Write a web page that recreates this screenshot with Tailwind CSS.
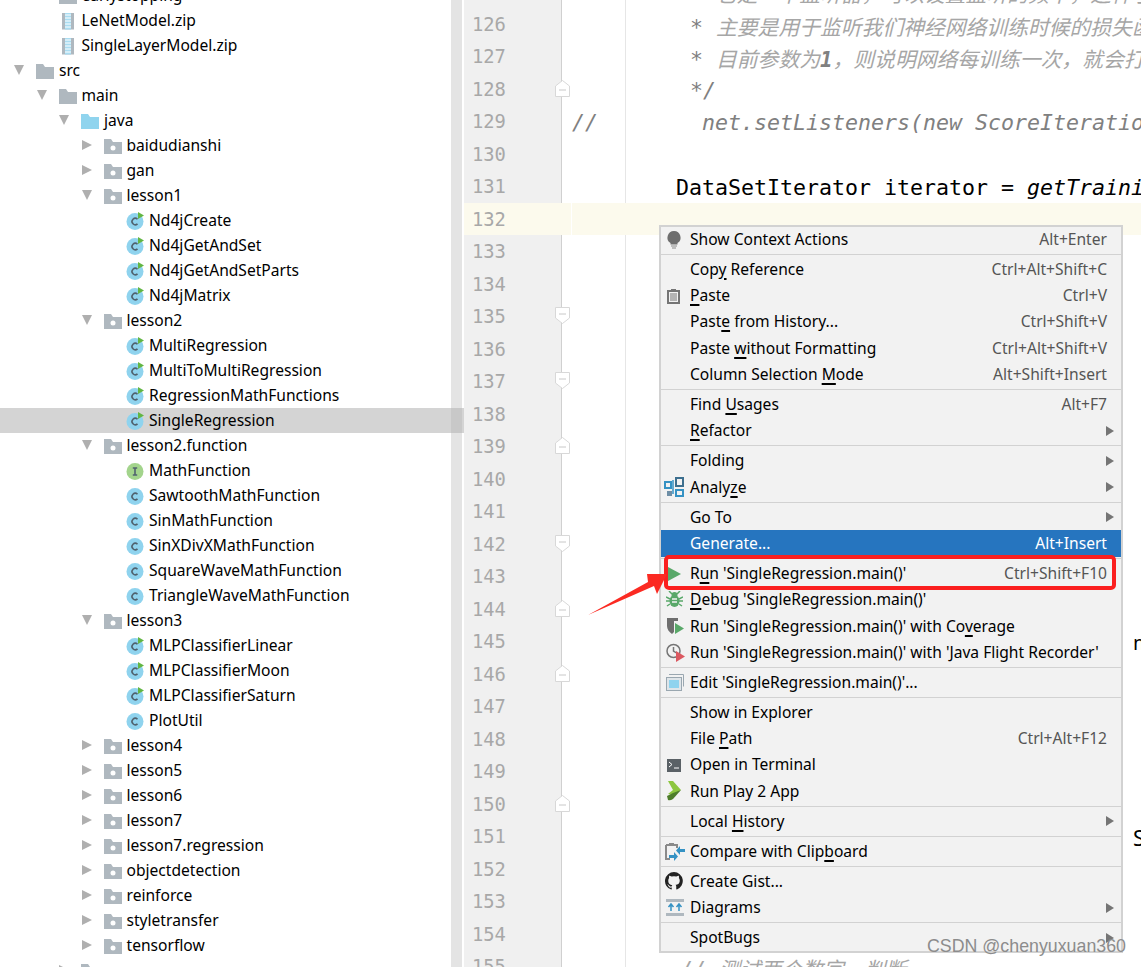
<!DOCTYPE html>
<html lang="en">
<head>
  <meta charset="UTF-8">
  <title>SingleRegression</title>
  <script src="https://cdn.jsdelivr.net/npm/@tailwindcss/browser@4"></script>
</head>
<body class="relative h-[967px] w-[1141px] overflow-hidden bg-white font-['Noto_Sans','Open_Sans',sans-serif] text-[15.6px] text-black">

  <!-- icon set -->
  <svg class="hidden">
    <symbol id="folder" viewBox="0 0 18 16"><path d="M0 1h7l2 3h9v12H0z" fill="#afb8bf"/></symbol>
    <symbol id="source" viewBox="0 0 18 16"><path d="M0 1h7l2 3h9v12H0z" fill="#90d4ee"/></symbol>
    <symbol id="package" viewBox="0 0 18 16"><path d="M0 1h7l2 3h9v12H0z" fill="#afb8bf"/><circle cx="9" cy="10" r="2.500" fill="#fff"/></symbol>
    <symbol id="zip" viewBox="0 0 18 18"><rect x="3" y="1" width="12" height="16.500" fill="#afb8bf"/><rect x="6" y="1" width="6" height="16.500" fill="#a9dcf1"/><path d="M6 3h6M6 6h6M6 9h6M6 12h6M6 15h6" stroke="#fff" stroke-width="1"/></symbol>
    <symbol id="class" viewBox="0 0 18 18"><circle cx="9" cy="9.500" r="8.500" fill="#8fd3ee"/><path d="M11.500 7.200a3.200 3.200 0 1 0 0 4.600" fill="none" stroke="#50626f" stroke-width="1.600"/></symbol>
    <symbol id="runnable" viewBox="0 0 18 18"><circle cx="9" cy="9.500" r="8.500" fill="#8fd3ee"/><path d="M11.500 7.200a3.200 3.200 0 1 0 0 4.600" fill="none" stroke="#50626f" stroke-width="1.600"/><path d="M12 0l6 3.500-6 3.500z" fill="#62b543"/></symbol>
    <symbol id="iface" viewBox="0 0 18 18"><circle cx="9" cy="9.500" r="8.500" fill="#a3d48c"/><path d="M6.800 6h4.400M6.800 13h4.400M9 6v7" fill="none" stroke="#50626f" stroke-width="1.600"/></symbol>
    <symbol id="foldup" viewBox="0 0 15 17"><path d="M.5 16.500V6L7.500.5l7 5.500v10.500z" fill="#fff" stroke="#d8d8d8"/><path d="M4 10h7" stroke="#c8c8c8"/></symbol>
    <symbol id="folddown" viewBox="0 0 15 17"><path d="M.5.5V11l7 5.500 7-5.500V.5z" fill="#fff" stroke="#d8d8d8"/><path d="M4 7h7" stroke="#c8c8c8"/></symbol>
    <symbol id="sub" viewBox="0 0 8 10"><path d="M0 0l8 5-8 5z" fill="#757575"/></symbol>
  </svg>

  <div class="flex h-full">
    <!-- project tree -->
    <div id="tree" class="w-[451px] shrink-0 overflow-hidden"></div>

    <!-- tree scrollbar strip -->
    <div class="w-[13px] shrink-0 border-r-2 border-white bg-[#e4e4e4]"></div>

    <!-- gutter -->
    <div id="gutter" class="w-[98px] shrink-0 border-r border-[#d0d0d0] bg-[#f0f0f0] pl-2 font-['DejaVu_Sans_Mono',monospace] text-[18.8px] text-[#a8a8a8]"></div>

    <!-- code -->
    <div class="relative min-w-0 flex-1 overflow-hidden font-['DejaVu_Sans_Mono',monospace] text-[21.6px] leading-[36px]">
      <div class="absolute top-0 bottom-0 left-[63px] w-px bg-[#e6e6e6]"></div>
      <div class="relative -mt-[24.75px]">
        <div class="h-[32.5px] overflow-hidden pl-[128px] whitespace-pre text-[#808080] italic">* <span class="font-['Noto_Sans_CJK_SC',sans-serif] text-[20.8px] text-[#a6a6a6]">它是一个监听器，可以设置监听的频率，这样子就可以</span></div>
        <div class="h-[32.5px] overflow-hidden pl-[128px] whitespace-pre text-[#808080] italic">* <span class="font-['Noto_Sans_CJK_SC',sans-serif] text-[20.8px] text-[#a6a6a6]">主要是用于监听我们神经网络训练时候的损失函数</span></div>
        <div class="h-[32.5px] overflow-hidden pl-[128px] whitespace-pre text-[#808080] italic">* <span class="font-['Noto_Sans_CJK_SC',sans-serif] text-[20.8px] text-[#a6a6a6]">目前参数为<b class="font-['DejaVu_Sans_Mono',monospace] text-[#808080]">1</b>，则说明网络每训练一次，就会打印一次</span></div>
        <div class="h-[32.5px] pl-[128px] text-[#808080] italic">*/</div>
        <div class="flex h-[32.5px] whitespace-pre text-[#808080] italic"><span class="w-[140px] shrink-0 pl-[10px]">//</span><span>net.setListeners(new ScoreIterationListener(1));</span></div>
        <div class="h-[32.5px]"></div>
        <div class="h-[32.5px] pl-[114px] whitespace-pre">DataSetIterator iterator = <i>getTrainingDataSetIterator();</i></div>
        <div class="relative h-[32.5px] bg-[#fcfaed]"><div class="absolute top-0 bottom-0 left-[9px] w-px bg-white"></div></div>
        <div class="h-[390px]"></div>
        <div class="flex h-[32.5px] justify-end font-['Noto_Sans',sans-serif] text-[20px]"><span class="w-[8px] overflow-hidden">m</span></div>
        <div class="h-[162.5px]"></div>
        <div class="flex h-[32.5px] justify-end font-['Noto_Sans',sans-serif]"><span class="w-[8px] overflow-hidden">S</span></div>
        <div class="h-[97.5px]"></div>
        <div class="h-[32.5px] pl-[118px] whitespace-pre text-[#a6a6a6] italic">// <span class="font-['Noto_Sans_CJK_SC',sans-serif] text-[20.8px]">测试两个数字，判断</span></div>
      </div>
    </div>
  </div>

  <!-- selected row over the scrollbar strip -->
  <div class="absolute top-[408px] left-[451px] h-[25px] w-[13px] border-r-2 border-[#d4d4d4] bg-[#c8c8c8]"></div>

  <!-- context menu -->
  <div class="absolute top-[225px] left-[659px] w-[464px] border-2 border-[#d2d2d2] bg-[#f2f2f2] [&_u]:decoration-[1.5px] [&_u]:underline-offset-[3px]" id="menu">
    <div class="flex h-[25.5px] items-center pr-[14px] pl-[29px]"><svg class="absolute left-[5px] h-[19px] w-[16px]" viewBox="0 0 16 19"><path d="M8 1a6.500 6.500 0 0 0-3.500 12v1.500h7V13A6.500 6.500 0 0 0 8 1z" fill="#6e6e6e"/><path d="M5 16h6M6 18h4" stroke="#8a8a8a"/></svg><span class="flex-1">Show Context Actions</span><span class="text-[#555]">Alt+Enter</span></div>
    <div class="my-[1.33px] h-px bg-[#d2d2d2]"></div>
    <div class="flex h-[26.33px] items-center pr-[14px] pl-[29px]"><span class="flex-1">Cop<u>y</u> Reference</span><span class="text-[#555]">Ctrl+Alt+Shift+C</span></div>
    <div class="flex h-[26.33px] items-center pr-[14px] pl-[29px]"><svg class="absolute left-[6px] h-[16px] w-[13px]" viewBox="0 0 13 16"><path d="M1 3h11v12H1z" fill="none" stroke="#757575" stroke-width="2"/><path d="M4 1h5v3H4z" fill="#757575"/><rect x="3" y="5" width="7" height="8" fill="#b4b4b4"/></svg><span class="flex-1"><u>P</u>aste</span><span class="text-[#555]">Ctrl+V</span></div>
    <div class="flex h-[26.33px] items-center pr-[14px] pl-[29px]"><span class="flex-1">Past<u>e</u> from History...</span><span class="text-[#555]">Ctrl+Shift+V</span></div>
    <div class="flex h-[26.33px] items-center pr-[14px] pl-[29px]"><span class="flex-1">Paste <u>w</u>ithout Formatting</span><span class="text-[#555]">Ctrl+Alt+Shift+V</span></div>
    <div class="flex h-[26.33px] items-center pr-[14px] pl-[29px]"><span class="flex-1">Column Selection <u>M</u>ode</span><span class="text-[#555]">Alt+Shift+Insert</span></div>
    <div class="my-[1.33px] h-px bg-[#d2d2d2]"></div>
    <div class="flex h-[26.33px] items-center pr-[14px] pl-[29px]"><span class="flex-1">Find <u>U</u>sages</span><span class="text-[#555]">Alt+F7</span></div>
    <div class="flex h-[26.33px] items-center pr-[7px] pl-[29px]"><span class="flex-1"><u>R</u>efactor</span><svg class="h-[10px] w-[8px]"><use href="#sub"/></svg></div>
    <div class="my-[1.33px] h-px bg-[#d2d2d2]"></div>
    <div class="flex h-[26.33px] items-center pr-[7px] pl-[29px]"><span class="flex-1">Folding</span><svg class="h-[10px] w-[8px]"><use href="#sub"/></svg></div>
    <div class="flex h-[26.33px] items-center pr-[7px] pl-[29px]"><svg class="absolute left-[3px] h-[20px] w-[20px]" viewBox="0 0 20 20"><rect x="1" y="5" width="6" height="6" fill="none" stroke="#3592c4" stroke-width="2"/><rect x="12" y="1" width="7" height="8" fill="none" stroke="#3d6f8f" stroke-width="2"/><rect x="3" y="14" width="5" height="5" fill="#6e8ea6"/><rect x="12" y="13" width="7" height="6" fill="none" stroke="#3592c4" stroke-width="2"/><path d="M9 3v14" stroke="#3592c4" stroke-width="1.500"/></svg><span class="flex-1">Analy<u>z</u>e</span><svg class="h-[10px] w-[8px]"><use href="#sub"/></svg></div>
    <div class="my-[1.33px] h-px bg-[#d2d2d2]"></div>
    <div class="flex h-[26.33px] items-center pr-[7px] pl-[29px]"><span class="flex-1">Go To</span><svg class="h-[10px] w-[8px]"><use href="#sub"/></svg></div>
    <div class="flex h-[26.33px] items-center bg-[#2675bf] pr-[14px] pl-[29px] text-white"><span class="flex-1">Generate...</span><span>Alt+Insert</span></div>
    <div class="my-[1.33px] h-px bg-[#d2d2d2]"></div>
    <div class="flex h-[26.33px] items-center pr-[14px] pl-[29px]"><svg class="absolute left-[7px] h-[14px] w-[13px]" viewBox="0 0 13 14"><path d="M0 0l13 7-13 7z" fill="#59a869"/></svg><span class="flex-1">R<u>u</u>n 'SingleRegression.main()'</span><span class="text-[#555]">Ctrl+Shift+F10</span></div>
    <div class="flex h-[26.33px] items-center pr-[14px] pl-[29px]"><svg class="absolute left-[5px] h-[17px] w-[17px]" viewBox="0 0 17 17"><ellipse cx="8.500" cy="10" rx="5" ry="6" fill="#59a869"/><circle cx="8.500" cy="4" r="3" fill="#59a869"/><path d="M0 6l4 2M17 6l-4 2M0 10h4M17 10h-4M1 15l3-2M16 15l-3-2M3 0l3 3M14 0l-3 3" stroke="#59a869" stroke-width="1.500"/><path d="M6 8h5M6 11h5" stroke="#f2f2f2" stroke-width="1.500"/></svg><span class="flex-1"><u>D</u>ebug 'SingleRegression.main()'</span></div>
    <div class="flex h-[26.33px] items-center pr-[14px] pl-[29px]"><svg class="absolute left-[5px] h-[18px] w-[19px]" viewBox="0 0 19 18"><path d="M1 1h11v3H8v11l-2 2C3 15 1 12 1 9z" fill="#6e6e6e"/><path d="M9 6l9 5.500L9 17z" fill="#59a869"/></svg><span class="flex-1">Run 'SingleRegression.main()' with Co<u>v</u>erage</span></div>
    <div class="flex h-[26.33px] items-center pr-[14px] pl-[29px]"><svg class="absolute left-[5px] h-[19px] w-[19px]" viewBox="0 0 19 19"><circle cx="7.500" cy="8" r="6.500" fill="none" stroke="#757575" stroke-width="1.500"/><path d="M7.500 4v4l3 2" fill="none" stroke="#757575" stroke-width="1.500"/><path d="M10 8l9 5.500L10 19z" fill="#db5860"/></svg><span class="flex-1">Run 'SingleRegression.main()' with 'Java Flight Recorder'</span></div>
    <div class="my-[1.33px] h-px bg-[#d2d2d2]"></div>
    <div class="flex h-[26.33px] items-center pr-[14px] pl-[29px]"><svg class="absolute left-[5px] h-[17px] w-[18px]" viewBox="0 0 18 17"><path d="M3 .5h14.500v12" fill="none" stroke="#9aa7b0"/><rect x=".5" y="3.500" width="15" height="13" fill="#dfe5e9" stroke="#9aa7b0"/><rect x="3" y="6" width="10" height="8" fill="#8fd3ee"/></svg><span class="flex-1">Edit 'SingleRegression.main()'...</span></div>
    <div class="my-[1.33px] h-px bg-[#d2d2d2]"></div>
    <div class="flex h-[26.33px] items-center pr-[14px] pl-[29px]"><span class="flex-1">Show in Explorer</span></div>
    <div class="flex h-[26.33px] items-center pr-[14px] pl-[29px]"><span class="flex-1">File <u>P</u>ath</span><span class="text-[#555]">Ctrl+Alt+F12</span></div>
    <div class="flex h-[26.33px] items-center pr-[14px] pl-[29px]"><svg class="absolute left-[6px] h-[13px] w-[14px]" viewBox="0 0 14 13"><rect width="14" height="13" fill="#5a6166"/><path d="M2 3l3 2.500L2 8" fill="none" stroke="#fff"/><path d="M7 9h5" stroke="#fff"/></svg><span class="flex-1">Open in Terminal</span></div>
    <div class="flex h-[26.33px] items-center pr-[14px] pl-[29px]"><svg class="absolute left-[6px] h-[20px] w-[14px]" viewBox="0 0 14 20"><path d="M1 0h5l8 9-8 5-5-1 5-4z" fill="#8dc63f"/><path d="M14 9l-8 9q-3 2-5 1l-1-4 6-3z" fill="#4e7d2b"/></svg><span class="flex-1">Run Play 2 App</span></div>
    <div class="my-[1.33px] h-px bg-[#d2d2d2]"></div>
    <div class="flex h-[26.33px] items-center pr-[7px] pl-[29px]"><span class="flex-1">Local <u>H</u>istory</span><svg class="h-[10px] w-[8px]"><use href="#sub"/></svg></div>
    <div class="my-[1.33px] h-px bg-[#d2d2d2]"></div>
    <div class="flex h-[26.33px] items-center pr-[14px] pl-[29px]"><svg class="absolute left-[4px] h-[19px] w-[20px]" viewBox="0 0 20 19"><path d="M1 3h11v3M1 3v14h4" fill="none" stroke="#8a8a8a" stroke-width="2"/><path d="M4 1h5v3H4z" fill="#8a8a8a"/><path d="M4 13h5v-3l4 4.500-4 4.500v-3H4z" fill="#3592c4"/><path d="M20 7h-5V4l-4 4.500 4 4.500v-3h5z" fill="#3592c4"/></svg><span class="flex-1">Compare with Clip<u>b</u>oard</span></div>
    <div class="my-[1.33px] h-px bg-[#d2d2d2]"></div>
    <div class="flex h-[26.33px] items-center pr-[14px] pl-[29px]"><svg class="absolute left-[4px] h-[18px] w-[18px]" viewBox="0 0 16 16"><path fill="#222" d="M8 0a8 8 0 0 0-2.500 15.600c.4.100.5-.2.500-.4v-1.400c-2.200.5-2.700-1-2.700-1-.4-.9-.9-1.200-.9-1.200-.7-.5.100-.5.100-.5.800.100 1.200.8 1.200.8.700 1.200 1.900.9 2.300.7.100-.5.300-.9.500-1.100-1.800-.2-3.600-.9-3.600-4 0-.9.300-1.600.8-2.100-.1-.2-.4-1 .100-2.100 0 0 .7-.2 2.200.8a7.600 7.600 0 0 1 4 0c1.500-1 2.200-.8 2.200-.8.400 1.100.2 1.900.1 2.100.5.600.8 1.300.8 2.100 0 3.100-1.900 3.700-3.700 3.900.3.300.6.800.6 1.500v2.200c0 .2.100.5.600.4A8 8 0 0 0 8 0z"/></svg><span class="flex-1">Create Gist...</span></div>
    <div class="flex h-[26.33px] items-center pr-[7px] pl-[29px]"><svg class="absolute left-[5px] h-[17px] w-[18px]" viewBox="0 0 18 17"><rect width="18" height="3" fill="#afb8bf"/><rect y="14" width="18" height="3" fill="#afb8bf"/><path d="M5 12V6M2.500 8L5 5l2.500 3M13 12V6M10.500 8L13 5l2.500 3" fill="none" stroke="#3592c4" stroke-width="1.500"/></svg><span class="flex-1">Diagrams</span><svg class="h-[10px] w-[8px]"><use href="#sub"/></svg></div>
    <div class="my-[1.33px] h-px bg-[#d2d2d2]"></div>
    <div class="flex h-[26.33px] items-center pr-[7px] pl-[29px]"><span class="flex-1">SpotBugs</span><svg class="h-[10px] w-[8px]"><use href="#sub"/></svg></div>
  </div>

  <!-- annotation: red box and arrow -->
  <div class="absolute top-[555px] left-[664px] h-[35px] w-[452px] rounded-[5px] border-[4px] border-[#fb1f1f]"></div>
  <svg class="absolute top-[565px] left-[585px] h-[55px] w-[85px]" viewBox="0 0 85 55"><path d="M3 50L63 17 62 9 82 9 72 29 69 21z" fill="#fb2a22"/></svg>

  <!-- watermark -->
  <div class="absolute top-[933px] left-[927px] font-['Liberation_Sans',sans-serif] text-[17.8px] text-[#8c8c8c]">CSDN @chenyuxuan360</div>

  <script>
    const rows = [
      [1, 'folder', 'earlystopping', ''],
      [1, 'zip', 'LeNetModel.zip', ''],
      [1, 'zip', 'SingleLayerModel.zip', ''],
      [0, 'folder', 'src', 'open'],
      [1, 'folder', 'main', 'open'],
      [2, 'source', 'java', 'open'],
      [3, 'package', 'baidudianshi', 'closed'],
      [3, 'package', 'gan', 'closed'],
      [3, 'package', 'lesson1', 'open'],
      [4, 'runnable', 'Nd4jCreate', ''],
      [4, 'runnable', 'Nd4jGetAndSet', ''],
      [4, 'runnable', 'Nd4jGetAndSetParts', ''],
      [4, 'runnable', 'Nd4jMatrix', ''],
      [3, 'package', 'lesson2', 'open'],
      [4, 'runnable', 'MultiRegression', ''],
      [4, 'runnable', 'MultiToMultiRegression', ''],
      [4, 'runnable', 'RegressionMathFunctions', ''],
      [4, 'runnable', 'SingleRegression', '', true],
      [3, 'package', 'lesson2.function', 'open'],
      [4, 'iface', 'MathFunction', ''],
      [4, 'class', 'SawtoothMathFunction', ''],
      [4, 'class', 'SinMathFunction', ''],
      [4, 'class', 'SinXDivXMathFunction', ''],
      [4, 'class', 'SquareWaveMathFunction', ''],
      [4, 'class', 'TriangleWaveMathFunction', ''],
      [3, 'package', 'lesson3', 'open'],
      [4, 'runnable', 'MLPClassifierLinear', ''],
      [4, 'runnable', 'MLPClassifierMoon', ''],
      [4, 'runnable', 'MLPClassifierSaturn', ''],
      [4, 'class', 'PlotUtil', ''],
      [3, 'package', 'lesson4', 'closed'],
      [3, 'package', 'lesson5', 'closed'],
      [3, 'package', 'lesson6', 'closed'],
      [3, 'package', 'lesson7', 'closed'],
      [3, 'package', 'lesson7.regression', 'closed'],
      [3, 'package', 'objectdetection', 'closed'],
      [3, 'package', 'reinforce', 'closed'],
      [3, 'package', 'styletransfer', 'closed'],
      [3, 'package', 'tensorflow', 'closed'],
      [2, 'folder', '', 'closed'],
    ];

    // chevrons sit one slot to the left of the icon
    const arrows = {
      open: '<svg class="absolute left-[-22px] top-[7px] h-[10px] w-[10px]" viewBox="0 0 10 10"><path d="M0 0h10L5 10z" fill="#afafaf"/></svg>',
      closed: '<svg class="absolute left-[-22px] top-[7px] h-[10px] w-[10px]" viewBox="0 0 10 10"><path d="M0 0l10 5-10 5z" fill="#afafaf"/></svg>',
      '': '',
    };

    document.getElementById('tree').innerHTML = rows.map(([depth, icon, name, state, selected]) => `
      <div class="flex h-[25px] items-center whitespace-pre ${selected ? 'bg-[#d4d4d4]' : ''} ${name === 'earlystopping' ? '-mt-[17px]' : ''}" style="padding-left:${36 + depth * 22.5}px">
        <span class="relative flex h-[25px] w-[23px] shrink-0 items-center">${arrows[state]}<svg class="h-[18px] w-[18px]"><use href="#${icon}"/></svg></span>
        <span>${name}</span>
      </div>`).join('');

    const folds = { 128: 'foldup', 135: 'folddown', 137: 'folddown', 139: 'foldup', 142: 'folddown', 144: 'foldup', 146: 'foldup', 150: 'foldup' };
    let gutter = '';
    for (let n = 125; n <= 155; n++) {
      gutter += `<div class="relative h-[32.5px] leading-[34px] ${n === 132 ? '-mr-px -ml-2 bg-[#fcfaed] pl-2' : ''}">${n}${folds[n] ? `<svg class="absolute right-[-9px] top-[7px] h-[17px] w-[15px]"><use href="#${folds[n]}"/></svg>` : ''}</div>`;
    }
    document.getElementById('gutter').innerHTML = `<div class="-mt-[24.75px]">${gutter}</div>`;
  </script>
</body>
</html>
